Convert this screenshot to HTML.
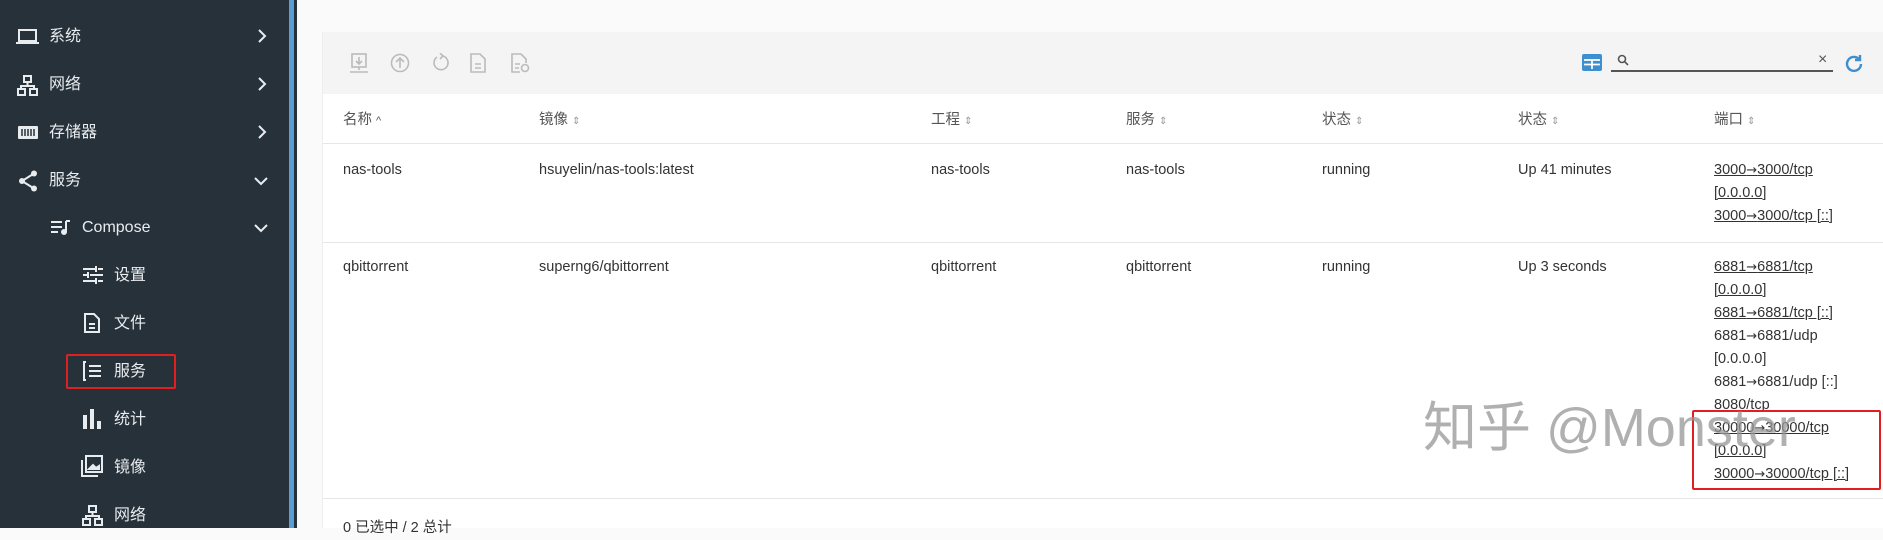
<!DOCTYPE html>
<html><head><meta charset="utf-8"><style>
*{margin:0;padding:0;box-sizing:border-box}
body{width:1883px;height:528px;overflow:hidden;background:#fafafa;font-family:"Liberation Sans","Noto Sans CJK SC",sans-serif;position:relative}
.sb{position:absolute;left:0;top:0;width:297px;height:528px;background:#27313a}
.sb .bl{position:absolute;left:289px;top:0;width:5px;height:528px;background:#5a9fd4}
.it{position:absolute;color:#e8ecef;font-size:16px;line-height:20px}
.ic{position:absolute}
.chev{position:absolute;left:256px}
.card{position:absolute;left:322px;top:32px;width:1561px;height:496px;background:#fff;border-left:1px solid #eee}
.tb{position:absolute;left:0;top:0;right:0;height:62px;background:#f4f4f4}
.t{position:absolute;font-size:14.5px;color:#333;line-height:23px}
.h{color:#555}
.hr{position:absolute;left:0;right:0;height:1px;background:#e6e6e6}
u{text-decoration:underline}
.a{font-family:"DejaVu Sans",sans-serif;font-size:13px}
.sort{font-size:10px;color:#999}
</style></head><body>
<div class="sb"><div class="bl"></div>
<svg class="ic" style="left:16px;top:27px" width="24" height="20" viewBox="0 0 24 20"><rect x="3" y="3" width="17" height="11" fill="none" stroke="#e8ecef" stroke-width="2"/><rect x="0" y="15" width="23" height="2" fill="#e8ecef"/></svg>
<div class="it" style="left:49px;top:27px">系统</div>
<svg class="chev" style="top:29px" width="12" height="14" viewBox="0 0 12 14" fill="none" stroke="#e8ecef" stroke-width="2"><path d="M3 1l6 6-6 6"/></svg>
<svg class="ic" style="left:17px;top:75px" width="22" height="22" viewBox="0 0 22 22" fill="none" stroke="#e8ecef" stroke-width="2"><rect x="7" y="1" width="7" height="6"/><rect x="1" y="14" width="7" height="6"/><rect x="13" y="14" width="7" height="6"/><path d="M10.5 7v4M4 14v-3h13v3"/></svg>
<div class="it" style="left:49px;top:75px">网络</div>
<svg class="chev" style="top:77px" width="12" height="14" viewBox="0 0 12 14" fill="none" stroke="#e8ecef" stroke-width="2"><path d="M3 1l6 6-6 6"/></svg>
<svg class="ic" style="left:17px;top:124px" width="22" height="18" viewBox="0 0 22 18"><rect x="1" y="2" width="20" height="13" rx="1" fill="#e8ecef"/><path d="M5 5v7M8 5v7M11 5v7M14 5v7M17 5v7" stroke="#27313a" stroke-width="1.5"/></svg>
<div class="it" style="left:49px;top:123px">存储器</div>
<svg class="chev" style="top:125px" width="12" height="14" viewBox="0 0 12 14" fill="none" stroke="#e8ecef" stroke-width="2"><path d="M3 1l6 6-6 6"/></svg>
<svg class="ic" style="left:18px;top:170px" width="20" height="22" viewBox="0 0 20 22" fill="#e8ecef"><circle cx="16" cy="3.5" r="3"/><circle cx="4" cy="11" r="3"/><circle cx="16" cy="18.5" r="3"/><path d="M16 3.5L4 11l12 7.5" stroke="#e8ecef" stroke-width="2" fill="none"/></svg>
<div class="it" style="left:49px;top:171px">服务</div>
<svg class="chev" style="top:176px;left:254px" width="14" height="10" viewBox="0 0 14 10" fill="none" stroke="#e8ecef" stroke-width="2"><path d="M1 2l6 6 6-6"/></svg>
<svg class="ic" style="left:51px;top:219px" width="20" height="16" viewBox="0 0 20 16" stroke="#e8ecef" stroke-width="2" fill="none"><path d="M0 3h11M0 8h11M0 13h7M15 2v11M15 2h4"/><circle cx="13" cy="13" r="2" fill="#e8ecef"/></svg>
<div class="it" style="left:82px;top:218px">Compose</div>
<svg class="chev" style="top:223px;left:254px" width="14" height="10" viewBox="0 0 14 10" fill="none" stroke="#e8ecef" stroke-width="2"><path d="M1 2l6 6 6-6"/></svg>
<svg class="ic" style="left:83px;top:266px" width="20" height="18" viewBox="0 0 20 18" stroke="#e8ecef" stroke-width="2"><path d="M0 3h12M15 3h5M13 0v6M0 9h4M7 9h13M5 6v6M0 15h12M15 15h5M13 12v6"/></svg>
<div class="it" style="left:114px;top:266px">设置</div>
<svg class="ic" style="left:84px;top:313px" width="16" height="20" viewBox="0 0 16 20" fill="none" stroke="#e8ecef" stroke-width="2"><path d="M1 1h9l5 5v13H1z"/><path d="M5 11h6M5 15h6"/></svg>
<div class="it" style="left:114px;top:314px">文件</div>
<svg class="ic" style="left:83px;top:361px" width="20" height="20" viewBox="0 0 20 20" stroke="#e8ecef" stroke-width="2" fill="none"><path d="M3 1h-2v18h2M6 5h12M6 10h12M6 15h12"/></svg>
<div class="it" style="left:114px;top:362px">服务</div>
<div style="position:absolute;left:66px;top:354px;width:110px;height:35px;border:2.5px solid #e02020;border-radius:2px"></div>
<svg class="ic" style="left:83px;top:409px" width="20" height="20" viewBox="0 0 20 20" fill="#e8ecef"><rect x="0" y="6" width="4" height="14"/><rect x="7" y="0" width="4" height="20"/><rect x="14" y="12" width="4" height="8"/></svg>
<div class="it" style="left:114px;top:410px">统计</div>
<svg class="ic" style="left:81px;top:455px" width="22" height="22" viewBox="0 0 22 22" fill="none" stroke="#e8ecef" stroke-width="2"><rect x="5" y="1" width="16" height="16"/><path d="M1 5v16h16"/><path d="M8 14l4-4 3 3 3-2v3z" fill="#e8ecef"/></svg>
<div class="it" style="left:114px;top:458px">镜像</div>
<svg class="ic" style="left:82px;top:505px" width="22" height="22" viewBox="0 0 22 22" fill="none" stroke="#e8ecef" stroke-width="2"><rect x="7" y="1" width="7" height="6"/><rect x="1" y="14" width="7" height="6"/><rect x="13" y="14" width="7" height="6"/><path d="M10.5 7v4M4 14v-3h13v3"/></svg>
<div class="it" style="left:114px;top:506px">网络</div>
</div>

<div class="card">
<div class="tb">
<svg style="position:absolute;left:26px;top:21px" width="20" height="22" viewBox="0 0 20 22" fill="none" stroke="#bbb" stroke-width="1.6"><rect x="3" y="1" width="14" height="13"/><path d="M10 4v7M7 8l3 3 3-3M10 14v3M1 19h18"/></svg>
<svg style="position:absolute;left:67px;top:21px" width="20" height="20" viewBox="0 0 20 20" fill="none" stroke="#bbb" stroke-width="1.6"><circle cx="10" cy="10" r="8.5"/><path d="M10 15V5M6 9l4-4 4 4"/></svg>
<svg style="position:absolute;left:109px;top:21px" width="18" height="20" viewBox="0 0 18 20" fill="none" stroke="#bbb" stroke-width="1.6"><path d="M5 4a7 7 0 1 0 6-1"/><path d="M8 0l3 3-3 3"/></svg>
<svg style="position:absolute;left:147px;top:21px" width="16" height="20" viewBox="0 0 16 20" fill="none" stroke="#bbb" stroke-width="1.6"><path d="M1 1h9l5 5v13H1z"/><path d="M5 11h6M5 15h6"/></svg>
<svg style="position:absolute;left:188px;top:21px" width="20" height="20" viewBox="0 0 20 20" fill="none" stroke="#bbb" stroke-width="1.6"><path d="M9 19H1V1h9l5 5v4"/><path d="M4 11h5M4 15h4"/><circle cx="14" cy="15" r="3.5"/></svg>
<svg style="position:absolute;left:1259px;top:22px" width="20" height="17" viewBox="0 0 20 17"><rect x="0" y="0" width="20" height="17" rx="2" fill="#3d8fd0"/><path d="M2 6h16M10 6v9M2 10.5h16" stroke="#fff" stroke-width="1.8"/><rect x="2" y="2" width="16" height="2" fill="#3d8fd0"/></svg>
<svg style="position:absolute;left:1294px;top:22px" width="12" height="12" viewBox="0 0 12 12" fill="none" stroke="#555" stroke-width="1.6"><circle cx="5" cy="5" r="3.5"/><path d="M7.5 7.5l3.5 3.5"/></svg>
<div style="position:absolute;left:1288px;top:38px;width:222px;height:2px;background:#555"></div>
<div style="position:absolute;left:1495px;top:19px;color:#555;font-size:16px">×</div>
<svg style="position:absolute;left:1520px;top:21px" width="22" height="22" viewBox="0 0 22 22" fill="none" stroke="#3d8fd0" stroke-width="2.4"><path d="M18 11a7 7 0 1 1-2-5"/><path d="M17 2v5h-5"/></svg>
</div>
<div class="hr" style="top:111px"></div>
<div class="hr" style="top:210px"></div>
<div class="hr" style="top:466px"></div>
<div class="t h" style="left:20px;top:77px">名称 <span style="font-size:11px">^</span></div>
<div class="t h" style="left:216px;top:77px">镜像 <span class="sort">⇕</span></div>
<div class="t h" style="left:608px;top:77px">工程 <span class="sort">⇕</span></div>
<div class="t h" style="left:803px;top:77px">服务 <span class="sort">⇕</span></div>
<div class="t h" style="left:999px;top:77px">状态 <span class="sort">⇕</span></div>
<div class="t h" style="left:1195px;top:77px">状态 <span class="sort">⇕</span></div>
<div class="t h" style="left:1391px;top:77px">端口 <span class="sort">⇕</span></div>

<div class="t" style="left:20px;top:127px">nas-tools</div>
<div class="t" style="left:216px;top:127px">hsuyelin/nas-tools:latest</div>
<div class="t" style="left:608px;top:127px">nas-tools</div>
<div class="t" style="left:803px;top:127px">nas-tools</div>
<div class="t" style="left:999px;top:127px">running</div>
<div class="t" style="left:1195px;top:127px">Up 41 minutes</div>
<div class="t" style="left:1391px;top:127px"><u>3000<span class="a">→</span>3000/tcp</u><br><u>[0.0.0.0]</u><br><u>3000<span class="a">→</span>3000/tcp [::]</u></div>

<div class="t" style="left:20px;top:224px">qbittorrent</div>
<div class="t" style="left:216px;top:224px">superng6/qbittorrent</div>
<div class="t" style="left:608px;top:224px">qbittorrent</div>
<div class="t" style="left:803px;top:224px">qbittorrent</div>
<div class="t" style="left:999px;top:224px">running</div>
<div class="t" style="left:1195px;top:224px">Up 3 seconds</div>
<div class="t" style="left:1391px;top:224px"><u>6881<span class="a">→</span>6881/tcp</u><br><u>[0.0.0.0]</u><br><u>6881<span class="a">→</span>6881/tcp [::]</u><br>6881<span class="a">→</span>6881/udp<br>[0.0.0.0]<br>6881<span class="a">→</span>6881/udp [::]<br>8080/tcp<br><u>30000<span class="a">→</span>30000/tcp</u><br><u>[0.0.0.0]</u><br><u>30000<span class="a">→</span>30000/tcp [::]</u></div>
<div style="position:absolute;left:1369px;top:378px;width:189px;height:80px;border:2.5px solid #e02020;border-radius:2px"></div>
<div style="position:absolute;left:1100px;top:366px;font-size:54px;color:rgba(150,150,150,0.75);white-space:nowrap;line-height:60px">知乎 @Monster</div>
<div class="t" style="left:20px;top:485px">0 已选中 / 2 总计</div>
</div>
</body></html>
